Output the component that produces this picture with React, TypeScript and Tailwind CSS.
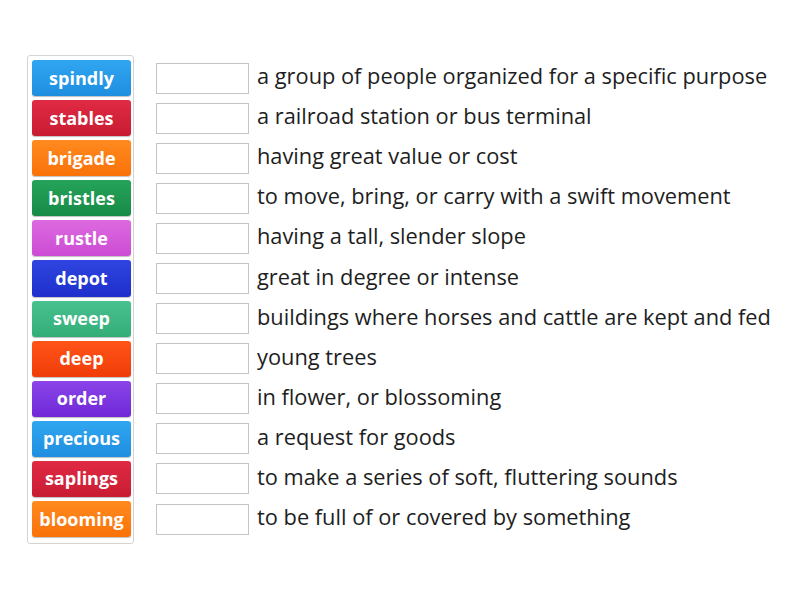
const TILES: { word: string; bg: string }[] = [
  { word: "spindly", bg: "bg-gradient-to-b from-[#30a6f0] to-[#1f8ee0]" },
  { word: "stables", bg: "bg-gradient-to-b from-[#e02a44] to-[#c81c32]" },
  { word: "brigade", bg: "bg-gradient-to-b from-[#ff8a1e] to-[#f97208]" },
  { word: "bristles", bg: "bg-gradient-to-b from-[#25a35a] to-[#178a48]" },
  { word: "rustle", bg: "bg-gradient-to-b from-[#dc6ae0] to-[#cc4bd4]" },
  { word: "depot", bg: "bg-gradient-to-b from-[#2f44e0] to-[#1f2fcc]" },
  { word: "sweep", bg: "bg-gradient-to-b from-[#48c190] to-[#33ad78]" },
  { word: "deep", bg: "bg-gradient-to-b from-[#ff5418] to-[#f03c08]" },
  { word: "order", bg: "bg-gradient-to-b from-[#8a44e8] to-[#7027d8]" },
  { word: "precious", bg: "bg-gradient-to-b from-[#30a6f0] to-[#1f8ee0]" },
  { word: "saplings", bg: "bg-gradient-to-b from-[#e02a44] to-[#c81c32]" },
  { word: "blooming", bg: "bg-gradient-to-b from-[#ff8a1e] to-[#f97208]" },
];

const DEFINITIONS = [
  "a group of people organized for a specific purpose",
  "a railroad station or bus terminal",
  "having great value or cost",
  "to move, bring, or carry with a swift movement",
  "having a tall, slender slope",
  "great in degree or intense",
  "buildings where horses and cattle are kept and fed",
  "young trees",
  "in flower, or blossoming",
  "a request for goods",
  "to make a series of soft, fluttering sounds",
  "to be full of or covered by something",
];

export default function App() {
  return (
    <div
      className="flex h-[600px] w-[800px] items-start bg-white pl-[27px] pt-[55px]"
      style={{ fontFamily: '"Open Sans", sans-serif' }}
    >
      <div className="flex flex-col gap-1 rounded-[3px] border border-[#d4d4d4] pb-[6px] pl-1 pr-[2px] pt-1">
        {TILES.map((t) => (
          <div
            key={t.word}
            className={`flex h-[36.1px] w-[99px] items-center justify-center rounded-[3px] text-[18px] font-bold text-white shadow-[0_1px_1px_rgba(0,0,0,0.25)] ${t.bg}`}
          >
            {t.word}
          </div>
        ))}
      </div>
      <div className="ml-[22px] mt-[5px] flex flex-col gap-1">
        {DEFINITIONS.map((d) => (
          <div key={d} className="flex h-[36.1px] items-center">
            <div className="h-[31px] w-[93px] border border-[#c4c4c4] bg-white" />
            <span className="ml-[8px] -mt-[4px] whitespace-nowrap text-[21.8px] leading-[30px] text-[#1e1e1e]">{d}</span>
          </div>
        ))}
      </div>
    </div>
  );
}
